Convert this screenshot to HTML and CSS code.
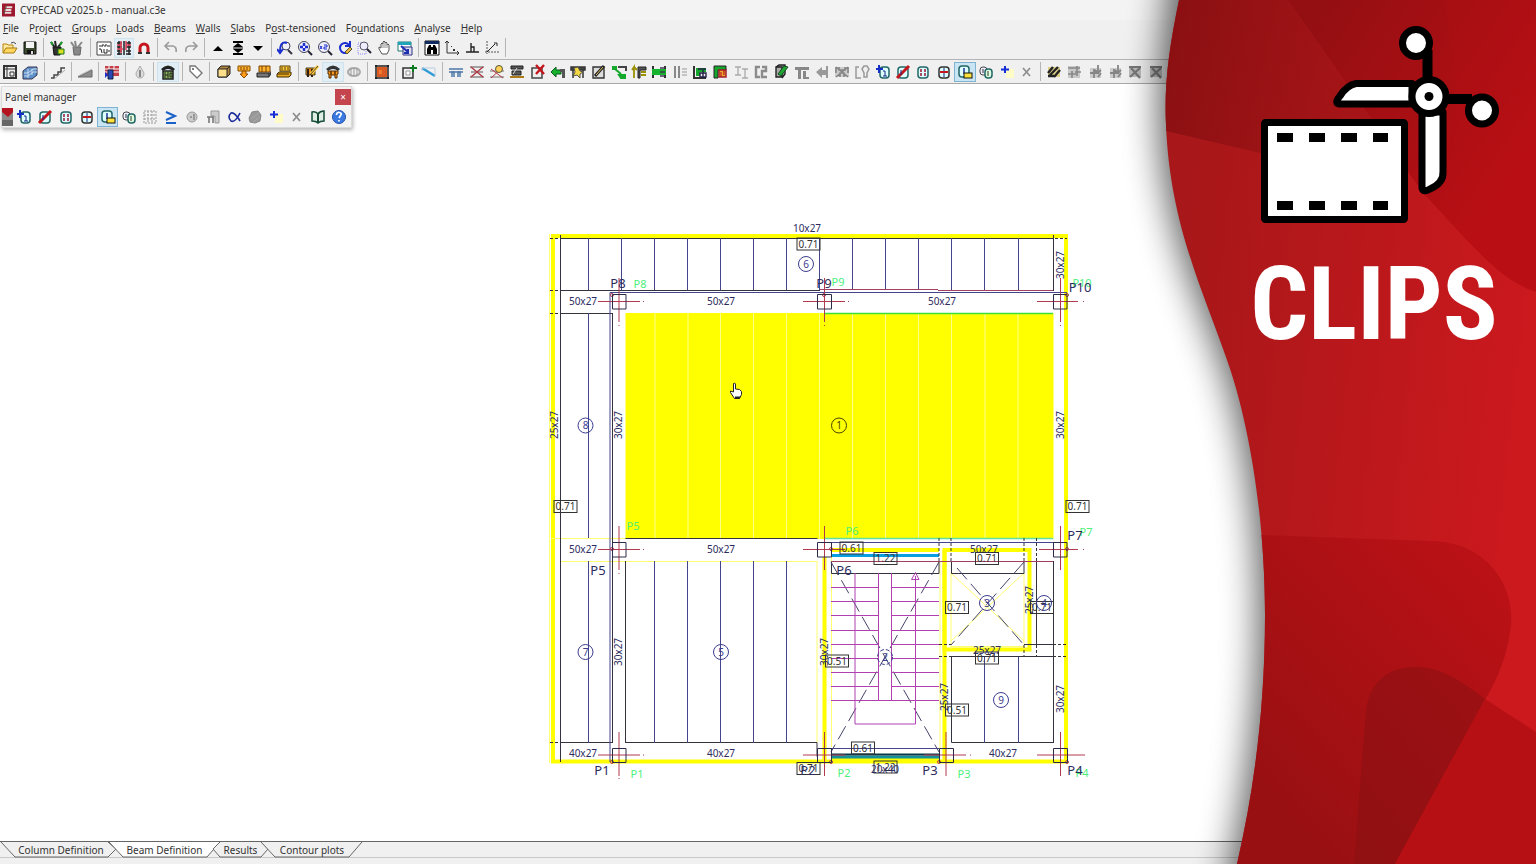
FILE: index.html
```html
<!doctype html>
<html lang="en">
  <head>
    <meta charset="UTF-8" />
    <meta name="viewport" content="width=device-width, initial-scale=1.0" />
    <title>CYPECAD v2025.b - manual.c3e</title>
    <link rel="stylesheet" href="styles.css">
  </head>
  <body>
    <!-- Icon set, 16x16 -->
    <svg class="icon-defs" aria-hidden="true">
      <symbol id="open" viewBox="0 0 16 16"><path d="M1 13V4h4l1 1h5v3" fill="#ffe9a0" stroke="#b8860b"/><path d="M1 13 4 8h11l-3 5z" fill="#ffd75e" stroke="#a87a10"/><path d="M9 3q3-2 5 1" fill="none" stroke="#444"/></symbol>
      <symbol id="save" viewBox="0 0 16 16"><path d="M2 2h12v12H2z" fill="#3c4a30" stroke="#111"/><path d="M4 2h8v6H4z" fill="#f4f4f4"/><path d="M5 10h7v4H5z" fill="#111"/><path d="M9 11h2v3H9z" fill="#ddd"/></symbol>
      <symbol id="cup" viewBox="0 0 16 16"><path d="M4 7h8l-1 8H5z" fill="#333" stroke="#111"/><path d="m2 2 4 6M6 1l1 6m6-5L9 7" stroke="#222" stroke-width="2"/><path d="m2 2 2 3m9-3-2 3" stroke="#17a02c" stroke-width="2"/><path d="M9 9h6v5H9z" fill="#d8e020" stroke="#197219"/></symbol>
      <symbol id="cup-off" viewBox="0 0 16 16"><path d="M4 7h8l-1 8H5z" fill="#888" stroke="#666"/><path d="m2 2 4 6M6 1l1 6m6-5L9 7" stroke="#888" stroke-width="2"/></symbol>
      <symbol id="dxf" viewBox="0 0 16 16"><path d="M1 2h14v13H1z" fill="#fff" stroke="#444"/><path d="M3 6h4V4m1 2h2V4m1 2h3M3 9h2l1 4M8 9v4h3V9m1 2h2" fill="none" stroke="#222"/></symbol>
      <symbol id="template" viewBox="0 0 16 16"><path d="M1 3h5m4 0h5M1 7h5m4 0h5M1 11h5m4 0h5M1 14h5m4 0h5M3 1v14M8 1v14M13 1v14" stroke="#222" stroke-width="1.500"/><path d="M1 5h5m4 0h5M1 9h6M5 1v12M10 1v9" stroke="#e0405a" stroke-width="1.500"/></symbol>
      <symbol id="magnet" viewBox="0 0 16 16"><path d="M4 14V8a4 4 0 0 1 8 0v6" fill="none" stroke="#c4161c" stroke-width="3"/><path d="M2 12h4v2H2zm8 0h4v2h-4z" fill="#333"/></symbol>
      <symbol id="undo" viewBox="0 0 16 16"><path d="M6 2 2 6l4 4M2 6h8q4 1 3 6" fill="none" stroke="#9a9a9a" stroke-width="1.6"/></symbol>
      <symbol id="redo" viewBox="0 0 16 16"><path d="m10 2 4 4-4 4m4-4H6q-4 1-3 6" fill="none" stroke="#9a9a9a" stroke-width="1.6"/></symbol>
      <symbol id="up" viewBox="0 0 16 16"><path d="m3 11 5-5 5 5z"/></symbol>
      <symbol id="updown" viewBox="0 0 16 16"><path d="M3 1h10v2H3zm0 12h10v2H3zM3 7l5-4 5 4zm0 2 5 4 5-4z"/><path d="M3 8h10" stroke="#000"/></symbol>
      <symbol id="down" viewBox="0 0 16 16"><path d="m3 6 5 5 5-5z"/></symbol>
      <symbol id="zoom-prev" viewBox="0 0 16 16"><circle cx="9" cy="6" r="4" fill="#eef" stroke="#445"/><path d="m11 10 4 4" stroke="#334" stroke-width="2"/><path d="M10 3Q3 0 3 12M0 9l3 4 3-4" fill="none" stroke="#1b2fd0" stroke-width="2"/></symbol>
      <symbol id="zoom-all" viewBox="0 0 16 16"><circle cx="7" cy="7" r="5.5" fill="#eef" stroke="#445"/><path d="M7 3v8M3 7h8" stroke="#1b2fd0" stroke-width="2.4" stroke-dasharray="3 2"/><path d="m11 11 4 4" stroke="#223" stroke-width="2"/></symbol>
      <symbol id="zoom-x2" viewBox="0 0 16 16"><circle cx="7" cy="7" r="5.5" fill="#eef" stroke="#445"/><path d="M3 6l2 3m0-3L3 9m4-4h3v2H7v2h3" fill="none" stroke="#1b2fd0"/><path d="m11 11 4 4" stroke="#223" stroke-width="2"/></symbol>
      <symbol id="redraw" viewBox="0 0 16 16"><path d="M12 5a5 5 0 1 0 0 6M13 1v5H8" fill="none" stroke="#1b2fd0" stroke-width="2"/><path d="m8 12 5-5 2 2-5 5z" fill="#e6b33c" stroke="#553"/></symbol>
      <symbol id="zoom-win" viewBox="0 0 16 16"><path d="M1 3h8v11H1z" fill="none" stroke="#88f" stroke-dasharray="1 1"/><circle cx="7" cy="6" r="4" fill="#eef" stroke="#556"/><path d="m10 9 4 4" stroke="#223" stroke-width="2"/></symbol>
      <symbol id="hand" viewBox="0 0 16 16"><path d="M5 14 2 9V7l2 1V4l1-1 1 1V2l1-1 1 1v1l1-1 1 1v2l1-1 1 1v5l-2 4z" fill="#fff" stroke="#555"/><path d="M6 4v4m2-5v5m2-4v4" stroke="#888"/></symbol>
      <symbol id="windows" viewBox="0 0 16 16"><path d="M1 2h13v9H1z" fill="#fff" stroke="#277"/><path d="M1 2h13v3H1z" fill="#21a4b8"/><path d="M6 7h9v8H6z" fill="#dde" stroke="#338"/><path d="m4 6 7 6m-4 1h4V9" fill="none" stroke="#1b2fb0" stroke-width="2"/></symbol>
      <symbol id="find" viewBox="0 0 16 16"><path d="M1 1h14v14H1z" fill="#fff" stroke="#111"/><path d="M1 1h14v3H1z" fill="#112a60"/><path d="M3 14V9l2-4h2v2h2V5h2l2 4v5H9v-4H7v4z"/></symbol>
      <symbol id="axes" viewBox="0 0 16 16"><path d="M3 1v12h12M1 3l2-2 2 2m8 8 2 2-2 2" fill="none" stroke="#333"/><path d="m7 6 1 1m3 2-2 2m0-2 2 2" stroke="#333"/></symbol>
      <symbol id="ortho" viewBox="0 0 16 16"><path d="M2 12h13M7 3v9m0-5h3v5" fill="none" stroke="#222" stroke-width="1.4"/></symbol>
      <symbol id="angle" viewBox="0 0 16 16"><path d="M3 1v13M1 12h14" stroke="#555" stroke-dasharray="2 1"/><path d="m3 12 8-8m-1-1h3v3" fill="none" stroke="#222"/></symbol>
      <symbol id="sheet" viewBox="0 0 16 16"><path d="M2 2h12v12H2z" fill="#eee" stroke="#333" stroke-width="2"/><path d="M5 2v12M2 5h12M8 8h4v4H8z" fill="none" stroke="#333"/></symbol>
      <symbol id="slabs" viewBox="0 0 16 16"><path d="M1 7 6 3h9v8l-5 4H1z" fill="#5d8fc8" stroke="#335"/><path d="M2 9h4l5-4h4M2 12h4l5-4h4M6 5v9m4-9v6" fill="none" stroke="#cde"/></symbol>
      <symbol id="stairs" viewBox="0 0 16 16"><path d="M1 14h3v-3h4V8h3V4h4" fill="none" stroke="#444" stroke-width="1.5"/><path d="m4 15 11-9" stroke="#aaa"/></symbol>
      <symbol id="ramp" viewBox="0 0 16 16"><path d="M1 13 15 6v7z" fill="#8d8d8d" stroke="#666"/><path d="M1 12 15 5" stroke="#bbb"/></symbol>
      <symbol id="brick" viewBox="0 0 16 16"><path d="M1 2h14v10H1z" fill="#c43f49"/><path d="M1 5h14M1 8h14M5 2v3m5-3v3" stroke="#fff"/><path d="M4 6h5v9H4z" fill="#2846b4" stroke="#124"/><path d="m1 8 3 3-3 3z" fill="#1b2fd0"/></symbol>
      <symbol id="drop" viewBox="0 0 16 16"><path d="M8 2 4 9q0 5 4 5t4-5z" fill="#ddd" stroke="#aaa"/><path d="M8 6v7" stroke="#888" stroke-width="2"/></symbol>
      <symbol id="cable" viewBox="0 0 16 16"><path d="M1 5q7-7 14 0l-2 2q-5-4-10 0z" fill="#222"/><path d="M3 7h10v8H3z" fill="#8bb85a" stroke="#222" stroke-width="1.5"/><path d="M5 8v6m3-6v6m-3-3h3m2-2v4h2V9z" fill="none" stroke="#222"/></symbol>
      <symbol id="tag" viewBox="0 0 16 16"><path d="M2 2h5l7 7-5 5-7-7z" fill="#fff" stroke="#777" stroke-width="1.4"/><circle cx="5" cy="5" r="1" fill="#555"/></symbol>
      <symbol id="cube" viewBox="0 0 16 16"><path d="m2 5 3-3h9v8l-3 3H2z" fill="#b0843b" stroke="#222"/><path d="M2 5h9v8H2z" fill="#ffe08a" stroke="#222"/><path d="m11 5 3-3" stroke="#222"/></symbol>
      <symbol id="load" viewBox="0 0 16 16"><path d="M2 2h12v5H2z" fill="#ffb52d" stroke="#8a4a00"/><path d="M5 3v3m3-3v3m3-3v3" stroke="#7b3f00"/><path d="m4 10 4 4 4-4h-2V7H6v3z" fill="#ff9b1a" stroke="#8a4a00"/></symbol>
      <symbol id="load-line" viewBox="0 0 16 16"><path d="M3 2h11v6H3z" fill="#ffb52d" stroke="#7b3f00"/><path d="M6 2v6m4-6v6" stroke="#7b3f00"/><path d="M1 9h12v4H1z" fill="#777" stroke="#222"/><path d="m13 9 2-2v4l-2 2z" fill="#444"/></symbol>
      <symbol id="load-slab" viewBox="0 0 16 16"><path d="M4 2h10v5H4z" fill="#ffcf40" stroke="#5d3c00"/><path d="M6 3v3m3-3v3m3-3v3" stroke="#5d3c00"/><path d="m1 10 2-2h12v3l-2 2H1z" fill="#e9a820" stroke="#3d2c00"/><path d="M1 10h12" stroke="#3d2c00"/></symbol>
      <symbol id="edit-load" viewBox="0 0 16 16"><path d="M2 4h9v7H2z" fill="#e98a19" stroke="#442"/><path d="M4 5v8m4-8v8" stroke="#321" stroke-width="2"/><path d="m7 10 7-8" stroke="#ffcf40" stroke-width="3"/><path d="m6 11 8-9" stroke="#543"/></symbol>
      <symbol id="show-load" viewBox="0 0 16 16"><path d="M1 5q7-7 14 0l-2 2q-5-4-10 0z" fill="#333"/><path d="M3 7h10v3h-1v4h-2v-3H6v3H4v-4H3z" fill="#f39a1e" stroke="#5b2b00"/><path d="M6 7v4m4-4v4" stroke="#5b2b00" stroke-width="1.500"/></symbol>
      <symbol id="ring-off" viewBox="0 0 16 16"><ellipse cx="8" cy="8" rx="6" ry="4" fill="#eee" stroke="#aaa" stroke-width="2"/><path d="M5 4v8m3-8v8m3-8v8" stroke="#999"/></symbol>
      <symbol id="opening" viewBox="0 0 16 16"><path d="M2 2h12v12H2z" fill="#d95a22" stroke="#555" stroke-width="2"/><path d="M1 1h2v2H1zm12 0h2v2h-2zM1 13h2v2H1zm12 0h2v2h-2z" fill="#222"/><path d="M5 6h3v4H5z" fill="#f07a36"/></symbol>
      <symbol id="new-beam" viewBox="0 0 16 16"><path d="M2 4h10v10H2z" fill="#eee" stroke="#333" stroke-width="1.5"/><path d="M5 7h4v4H5z" fill="#fff" stroke="#999"/><path d="M12 1v7M9 4h7" stroke="#0a7a20" stroke-width="2"/></symbol>
      <symbol id="line-beam" viewBox="0 0 16 16"><path d="m1 4 13 8" stroke="#2e9ad6" stroke-width="2.4"/><path d="M1 7V4h13v9" fill="none" stroke="#bcd"/></symbol>
      <symbol id="supports" viewBox="0 0 16 16"><path d="M1 5h14M1 8h14" stroke="#4d7aa8" stroke-width="1.6"/><path d="M4 13V8h2v5m4 0V8h2v5" fill="none" stroke="#4d7aa8" stroke-width="1.500"/></symbol>
      <symbol id="cross-red" viewBox="0 0 16 16"><path d="M1 3h14M1 13h14M2 8h12" stroke="#555"/><path d="m2 3 12 10M14 3 2 13" stroke="#b23844" stroke-width="1.4"/></symbol>
      <symbol id="cross-bell" viewBox="0 0 16 16"><path d="M1 7h14M1 13h14" stroke="#777"/><path d="m2 5 12 9M12 5 2 14" stroke="#b23844"/><circle cx="10" cy="5" r="3.5" fill="#ffd257" stroke="#553"/></symbol>
      <symbol id="depth" viewBox="0 0 16 16"><path d="M2 2h12v3H2zm1 5h9v4H3z" fill="#555" stroke="#222"/><path d="M1 13h14" stroke="#ad7a18" stroke-width="2"/><path d="m8 4-4 6" stroke="#ddd"/></symbol>
      <symbol id="delete-beam" viewBox="0 0 16 16"><path d="M2 4h10v10H2z" fill="#eee" stroke="#444" stroke-width="1.5"/><path d="m6 1 8 9m0-9-8 9" stroke="#c4161c" stroke-width="2.4"/></symbol>
      <symbol id="assign" viewBox="0 0 16 16"><path d="m1 8 5-5v3h5v4H6v3z" fill="#15b32c" stroke="#0a5a18"/><path d="M10 5h5v9h-3V8h-2z" fill="#555"/></symbol>
      <symbol id="star-beam" viewBox="0 0 16 16"><path d="M1 3h14v3H1zM3 6v8m10-8v8" fill="#444" stroke="#333" stroke-width="1.5"/><path d="m8 3 2 4 3 1-3 2v4l-3-3-4 1 2-4-1-4z" fill="#f6d842" stroke="#554"/></symbol>
      <symbol id="edit-beam" viewBox="0 0 16 16"><path d="M2 3h11v11H2z" fill="#ddd" stroke="#333" stroke-width="1.4"/><path d="m4 12 9-10" stroke="#222" stroke-width="3"/><path d="m5 11 7-8" stroke="#e4c265"/></symbol>
      <symbol id="align" viewBox="0 0 16 16"><path d="M1 2h5v4H1z" fill="#14a82c"/><path d="M7 3h8v4" fill="none" stroke="#444" stroke-width="2"/><path d="m4 5 6 5m-2 1h6v3h-4z" fill="#14a82c" stroke="#14a82c" stroke-width="2"/></symbol>
      <symbol id="offset" viewBox="0 0 16 16"><path d="M7 3h8v3H9v8H7z" fill="#555" stroke="#222"/><path d="M3 14V3L1 6m2-3 3 3M10 8h5m-5 3h5" fill="none" stroke="#9a9000" stroke-width="1.8"/></symbol>
      <symbol id="join" viewBox="0 0 16 16"><path d="M2 2v12M14 2v12" stroke="#333" stroke-width="2"/><path d="M1 5h14v6H1z" fill="#16b42d"/><path d="M9 4h5M9 8h5m-5 4h5" stroke="#435" stroke-width="1.500"/></symbol>
      <symbol id="lines-off" viewBox="0 0 16 16"><path d="M3 2v12M7 2v12" stroke="#888" stroke-width="2"/><path d="M10 5h5M10 8h5m-5 3h5" stroke="#999"/></symbol>
      <symbol id="frame" viewBox="0 0 16 16"><path d="M2 2v12h12" fill="none" stroke="#333" stroke-width="2"/><path d="M4 4h10v4H8v4H4z" fill="#16a62d"/><path d="M8 9h6v4H8zM6 5h8M11 6v7" fill="none" stroke="#224" stroke-width="1.4"/></symbol>
      <symbol id="copy-frame" viewBox="0 0 16 16"><path d="M2 2h12v4H6v8H2z" fill="#16a62d" stroke="#222"/><path d="M7 6h7v7H7z" fill="#f0a62b" stroke="#a0202c" stroke-width="1.5"/><path d="M9 8v5m3-7v5" stroke="#a02"/></symbol>
      <symbol id="ibeam-off" viewBox="0 0 16 16"><path d="M2 3h6M5 3v8M2 11h6m1-6h6m-3 0v9m-3 0h6" fill="none" stroke="#aaa" stroke-width="1.3"/></symbol>
      <symbol id="copy-off" viewBox="0 0 16 16"><path d="M7 3H3v10h4m2-10h4v4H9v6h5" fill="none" stroke="#8b8b8b" stroke-width="2.4"/></symbol>
      <symbol id="edit-green" viewBox="0 0 16 16"><path d="M3 3h6v10H3zl3-2h6v9l-3 4" fill="#aaa" stroke="#222" stroke-width="1.4"/><path d="m5 10 6-8 4 1-7 9z" fill="#1fa735" stroke="#124d1b"/></symbol>
      <symbol id="portal-off" viewBox="0 0 16 16"><path d="M1 3h14v3H7v9H4V6H1zm8 4h3v6h3v2H9z" fill="#888"/></symbol>
      <symbol id="left-off" viewBox="0 0 16 16"><path d="m2 8 6-5v3h5v5H8v3zM12 2h2v12h-2z" fill="#999"/></symbol>
      <symbol id="mesh-off" viewBox="0 0 16 16"><path d="M1 3h14v10H1z" fill="#ccc"/><path d="m2 3 12 10M14 3 2 13M2 3v6m12-6v6M5 3v3h6V3M6 13V9h4v4" fill="none" stroke="#858585" stroke-width="1.6"/></symbol>
      <symbol id="poly-off" viewBox="0 0 16 16"><path d="M5 3H2v11h5" fill="none" stroke="#999" stroke-width="1.5"/><path d="M8 5l2-3h3l2 3-2 4v4h-3V9z" fill="none" stroke="#999" stroke-width="1.500"/></symbol>
      <symbol id="p-new" viewBox="0 0 16 16"><rect x="5" y="3" width="9" height="11" rx="3" fill="#dff" stroke="#266" stroke-width="1.5"/><path d="M8 7h2v5m-2 0h4" fill="none" stroke="#14248c"/><path d="M4 1v8M1 5h7" stroke="#142fc8" stroke-width="2"/></symbol>
      <symbol id="p-del" viewBox="0 0 16 16"><rect x="3" y="3" width="10" height="11" rx="3" fill="#dff" stroke="#266" stroke-width="1.5"/><path d="m2 14 12-12" stroke="#c4161c" stroke-width="3"/><path d="M6 6v5" stroke="#14248c"/></symbol>
      <symbol id="p-num" viewBox="0 0 16 16"><rect x="3" y="3" width="10" height="11" rx="3" fill="#dff" stroke="#266" stroke-width="1.5"/><path d="M6 5v7m4-7v7" stroke="#a12440" stroke-width="1.6" stroke-dasharray="3 1"/></symbol>
      <symbol id="p-split" viewBox="0 0 16 16"><rect x="3" y="3" width="10" height="11" rx="3" fill="#dff" stroke="#333" stroke-width="1.5"/><path d="M8 4v9" stroke="#14248c"/><path d="M4 8h8" stroke="#c4161c" stroke-width="2"/></symbol>
      <symbol id="p-edit" viewBox="0 0 16 16"><rect x="2" y="2" width="10" height="11" rx="3" fill="#dff" stroke="#266" stroke-width="1.5"/><path d="M7 4v6" stroke="#14248c" stroke-width="1.4"/><rect x="7" y="9" width="8" height="5" fill="#ffe23a" stroke="#111"/></symbol>
      <symbol id="p-copy" viewBox="0 0 16 16"><rect x="2" y="3" width="7" height="8" rx="3" fill="#eef" stroke="#444"/><rect x="7" y="5" width="7" height="9" rx="3" fill="#dfd" stroke="#266" stroke-width="1.5"/><path d="M5 5v4m5-2v5" stroke="#333"/></symbol>
      <symbol id="plus-note" viewBox="0 0 16 16"><path d="M7 5h8v9H7z" fill="#fffcc8"/><path d="M6 2v7M2 5.500h8" stroke="#142fd8" stroke-width="2"/></symbol>
      <symbol id="x-off" viewBox="0 0 16 16"><path d="m4 4 7 8m0-8-7 8" stroke="#8d8d8d" stroke-width="1.7"/></symbol>
      <symbol id="rebar" viewBox="0 0 16 16"><path d="M2 3h12v10H2z" fill="#ddd18a"/><path d="m2 9 5-6m-3 8 8-8M8 13l6-7M2 12h6" stroke="#222" stroke-width="2.4"/></symbol>
      <symbol id="add-off" viewBox="0 0 16 16"><path d="M2 2h12v12H2z" fill="#c8c8c8"/><path d="M2 4h12M6 7v7M2 10h8m1-8v10m-2-4h6" stroke="#888" stroke-width="1.6"/></symbol>
      <symbol id="move-off" viewBox="0 0 16 16"><path d="M3 4h11v10H3z" fill="#ccc"/><path d="M3 9h9m-5 5V5m4 8 3-4M11 1v7M8 6l3 3 3-3" fill="none" stroke="#858585" stroke-width="1.8"/></symbol>
      <symbol id="del-off" viewBox="0 0 16 16"><path d="M2 3h12v10H2z" fill="#bbb"/><path d="m3 13 10-9M4 4l9 10M2 3h12" stroke="#777" stroke-width="2.2"/></symbol>
      <symbol id="p-grid" viewBox="0 0 16 16"><path d="M2 2h12v12H2zM6 2v12m4-12v12M2 6h12M2 10h12" fill="none" stroke="#999" stroke-dasharray="2 1"/></symbol>
      <symbol id="geq" viewBox="0 0 16 16"><path d="m3 3 9 4-9 4m0 3h10" fill="none" stroke="#1a62c8" stroke-width="2"/></symbol>
      <symbol id="disk-off" viewBox="0 0 16 16"><circle cx="8" cy="8" r="5" fill="#ccc" stroke="#999"/><path d="M6 8h2m2-3v6" fill="none" stroke="#888" stroke-width="1.5"/></symbol>
      <symbol id="col-off" viewBox="0 0 16 16"><path d="M6 2h8v12h-4V7H6z" fill="#ccc" stroke="#999"/><path d="M2 8h7M4 8v6m4-6v6" stroke="#777" stroke-width="1.6"/></symbol>
      <symbol id="alpha" viewBox="0 0 16 16"><path d="M14 4Q9 14 5 12q-4-4 0-8 4-1 9 8" fill="none" stroke="#1c2c9a" stroke-width="1.6"/></symbol>
      <symbol id="rock-off" viewBox="0 0 16 16"><path d="m2 9 3-6 6-1 3 4-1 6-5 2-5-1z" fill="#999" stroke="#888"/><path d="m4 10 8-6m-6 9 7-5" stroke="#aaa"/></symbol>
      <symbol id="book" viewBox="0 0 16 16"><path d="M2 3q4-1 6 2 2-3 6-3v10q-4 0-6 2-2-2-6-2z" fill="#dfeee4" stroke="#124a35" stroke-width="1.5"/><path d="M8 5v9" stroke="#124a35" stroke-width="2"/></symbol>
      <symbol id="help" viewBox="0 0 16 16"><circle cx="8" cy="8" r="6.500" fill="#3a7ae0" stroke="#2350b0"/><path d="M5.500 6q0-3 3-2.500 3 1 1 3L8 9m0 2v1.500" fill="none" stroke="#fff" stroke-width="1.7"/></symbol>
      <symbol id="grip" viewBox="0 0 11 18"><path d="M0 3h11v15H0z" fill="#8a8a8a"/><path d="M0 12h11v6H0z" fill="#666"/><path d="M0 0h11v4L6 9 0 4z" fill="#b5121f"/></symbol>
    </svg>

    <header class="app-header">
      <div class="titlebar">
        <svg class="app-icon" viewBox="0 0 14 14" aria-hidden="true"><path d="M0 0h14v14H0z" fill="#9e1830"/><path d="M4 3h7v2H4zM3 6h7v2H3zm0 3h7v2H3z" fill="#e9dcdc"/><path d="m2 11 3-9" stroke="#554" /></svg>
        <span>CYPECAD v2025.b - manual.c3e</span>
      </div>
      <nav class="menubar">
        <a href="#"><u>F</u>ile</a>
        <a href="#">P<u>r</u>oject</a>
        <a href="#"><u>G</u>roups</a>
        <a href="#"><u>L</u>oads</a>
        <a href="#"><u>B</u>eams</a>
        <a href="#"><u>W</u>alls</a>
        <a href="#"><u>S</u>labs</a>
        <a href="#">P<u>o</u>st-tensioned</a>
        <a href="#">Fo<u>u</u>ndations</a>
        <a href="#"><u>A</u>nalyse</a>
        <a href="#"><u>H</u>elp</a>
      </nav>
      <div class="toolbar" role="toolbar" aria-label="Main">
        <button class="tool" aria-label="Open"><svg><use href="#open"/></svg></button>
        <button class="tool" aria-label="Save"><svg><use href="#save"/></svg></button>
        <span class="sep"></span>
        <button class="tool" aria-label="Edit resources"><svg><use href="#cup"/></svg></button>
        <button class="tool" aria-label="Resources"><svg><use href="#cup-off"/></svg></button>
        <span class="sep"></span>
        <button class="tool" aria-label="DXF template"><svg><use href="#dxf"/></svg></button>
        <button class="tool soft" aria-label="Template views"><svg><use href="#template"/></svg></button>
        <button class="tool" aria-label="Snap"><svg><use href="#magnet"/></svg></button>
        <span class="sep"></span>
        <button class="tool" aria-label="Undo"><svg><use href="#undo"/></svg></button>
        <button class="tool" aria-label="Redo"><svg><use href="#redo"/></svg></button>
        <span class="sep"></span>
        <button class="tool" aria-label="Group up"><svg><use href="#up"/></svg></button>
        <button class="tool" aria-label="Go to group"><svg><use href="#updown"/></svg></button>
        <button class="tool" aria-label="Group down"><svg><use href="#down"/></svg></button>
        <span class="sep"></span>
        <button class="tool" aria-label="Previous view"><svg><use href="#zoom-prev"/></svg></button>
        <button class="tool" aria-label="Full view"><svg><use href="#zoom-all"/></svg></button>
        <button class="tool" aria-label="Double view"><svg><use href="#zoom-x2"/></svg></button>
        <button class="tool" aria-label="Redraw"><svg><use href="#redraw"/></svg></button>
        <button class="tool" aria-label="Zoom window"><svg><use href="#zoom-win"/></svg></button>
        <button class="tool" aria-label="Pan"><svg><use href="#hand"/></svg></button>
        <button class="tool" aria-label="Windows"><svg><use href="#windows"/></svg></button>
        <span class="sep"></span>
        <button class="tool" aria-label="Find"><svg><use href="#find"/></svg></button>
        <button class="tool" aria-label="Coordinates"><svg><use href="#axes"/></svg></button>
        <button class="tool" aria-label="Orthogonal"><svg><use href="#ortho"/></svg></button>
        <button class="tool" aria-label="Angle"><svg><use href="#angle"/></svg></button>
        <span class="sep"></span>
      </div>
      <div class="toolbar toolbar-wide" role="toolbar" aria-label="Beam definition">
        <button class="tool" aria-label="General data"><svg><use href="#sheet"/></svg></button>
        <button class="tool" aria-label="3D view"><svg><use href="#slabs"/></svg></button>
        <span class="sep"></span>
        <button class="tool" aria-label="Stairs"><svg><use href="#stairs"/></svg></button>
        <span class="sep"></span>
        <button class="tool" aria-label="Ramp"><svg><use href="#ramp"/></svg></button>
        <span class="sep"></span>
        <button class="tool" aria-label="Masonry"><svg><use href="#brick"/></svg></button>
        <span class="sep"></span>
        <button class="tool" aria-label="Fire"><svg><use href="#drop"/></svg></button>
        <span class="sep"></span>
        <button class="tool soft" aria-label="Visible items"><svg><use href="#cable"/></svg></button>
        <span class="sep"></span>
        <button class="tool" aria-label="Label"><svg><use href="#tag"/></svg></button>
        <span class="sep"></span>
        <button class="tool" aria-label="Solid"><svg><use href="#cube"/></svg></button>
        <button class="tool" aria-label="Point load"><svg><use href="#load"/></svg></button>
        <button class="tool" aria-label="Line load"><svg><use href="#load-line"/></svg></button>
        <button class="tool" aria-label="Surface load"><svg><use href="#load-slab"/></svg></button>
        <span class="sep"></span>
        <button class="tool" aria-label="Edit loads"><svg><use href="#edit-load"/></svg></button>
        <button class="tool soft" aria-label="Show loads"><svg><use href="#show-load"/></svg></button>
        <button class="tool" aria-label="Load ring"><svg><use href="#ring-off"/></svg></button>
        <span class="sep"></span>
        <button class="tool" aria-label="Opening"><svg><use href="#opening"/></svg></button>
        <span class="sep"></span>
        <button class="tool" aria-label="New beam"><svg><use href="#new-beam"/></svg></button>
        <button class="tool" aria-label="Beam line"><svg><use href="#line-beam"/></svg></button>
        <span class="sep"></span>
        <button class="tool" aria-label="Supports"><svg><use href="#supports"/></svg></button>
        <button class="tool" aria-label="Braces"><svg><use href="#cross-red"/></svg></button>
        <button class="tool" aria-label="Brace info"><svg><use href="#cross-bell"/></svg></button>
        <button class="tool" aria-label="Depth"><svg><use href="#depth"/></svg></button>
        <button class="tool" aria-label="Delete beam"><svg><use href="#delete-beam"/></svg></button>
        <button class="tool" aria-label="Assign"><svg><use href="#assign"/></svg></button>
        <button class="tool" aria-label="Match"><svg><use href="#star-beam"/></svg></button>
        <button class="tool" aria-label="Edit beam"><svg><use href="#edit-beam"/></svg></button>
        <button class="tool" aria-label="Align"><svg><use href="#align"/></svg></button>
        <button class="tool" aria-label="Offset"><svg><use href="#offset"/></svg></button>
        <button class="tool" aria-label="Join"><svg><use href="#join"/></svg></button>
        <button class="tool" aria-label="Ties"><svg><use href="#lines-off"/></svg></button>
        <button class="tool" aria-label="Frame"><svg><use href="#frame"/></svg></button>
        <button class="tool" aria-label="Copy frame"><svg><use href="#copy-frame"/></svg></button>
        <button class="tool" aria-label="Sections"><svg><use href="#ibeam-off"/></svg></button>
        <button class="tool" aria-label="Copy"><svg><use href="#copy-off"/></svg></button>
        <button class="tool" aria-label="Edit portal"><svg><use href="#edit-green"/></svg></button>
        <button class="tool" aria-label="Portal"><svg><use href="#portal-off"/></svg></button>
        <button class="tool" aria-label="Back"><svg><use href="#left-off"/></svg></button>
        <button class="tool" aria-label="Mesh"><svg><use href="#mesh-off"/></svg></button>
        <button class="tool" aria-label="Contour"><svg><use href="#poly-off"/></svg></button>
        <button class="tool" aria-label="New panel"><svg><use href="#p-new"/></svg></button>
        <button class="tool" aria-label="Delete panel"><svg><use href="#p-del"/></svg></button>
        <button class="tool" aria-label="Number panels"><svg><use href="#p-num"/></svg></button>
        <button class="tool" aria-label="Split panel"><svg><use href="#p-split"/></svg></button>
        <button class="tool on" aria-label="Edit panel"><svg><use href="#p-edit"/></svg></button>
        <button class="tool" aria-label="Copy panel"><svg><use href="#p-copy"/></svg></button>
        <button class="tool" aria-label="Add note"><svg><use href="#plus-note"/></svg></button>
        <button class="tool" aria-label="Remove"><svg><use href="#x-off"/></svg></button>
        <span class="sep"></span>
        <button class="tool" aria-label="Reinforcement"><svg><use href="#rebar"/></svg></button>
        <button class="tool" aria-label="Add bar"><svg><use href="#add-off"/></svg></button>
        <button class="tool" aria-label="Move bar"><svg><use href="#move-off"/></svg></button>
        <button class="tool" aria-label="Copy bar"><svg><use href="#move-off"/></svg></button>
        <button class="tool" aria-label="Edit bar"><svg><use href="#del-off"/></svg></button>
        <button class="tool" aria-label="Delete bar"><svg><use href="#del-off"/></svg></button>
      </div>
    </header>

    <main class="workspace">
      <svg class="plan" viewBox="0 84 1536 757" preserveAspectRatio="xMinYMin meet" role="img" aria-label="Floor plan">
        <!-- slab panel in selection colour -->
        <path d="M625.500 313h428v226h-428z" fill="#ff0"/>
        <path class="rib-light" d="M655 313v226M688 313v226M720.500 313v226M753.500 313v226M786.500 313v226M819.500 313v226M852.500 313v226M885.500 313v226M918.500 313v226M951.500 313v226M985 313v226M1018 313v226"/>

        <!-- load lines -->
        <g class="load-lines">
          <rect x="553" y="236" width="513" height="525.500"/>
          <path d="M824.500 557v205M944.500 550v212M831 550h108M831 760h108"/>
          <rect x="944.500" y="550" width="85" height="99.500"/>
        </g>
        <path class="load-thin" d="M549.500 234v529M551 538.500h266M560 561.500h257M817 561v182M831.500 557v190M940 561v188M951 573v76M1024 573v76M951 573l73 68M951 641l73-68M951 646.500h73"/>

        <!-- beam outlines and joists -->
        <g class="lines">
          <path d="M560.500 235v527M560 238.500h493M560 290.500h260M560 313.500h52M612.500 313v430M560 742.500h52M625.500 538.500h192M625.500 561v182M626 742.500h191v14M1053.500 235v56M831.500 561v12.500h107.500V561M951.500 561v12.500h72.500V561M1036.500 561v84M1053.500 561v182M1024 644.500h29M951 656.500h102M951.500 656v86.500h102"/>
        </g>
        <g class="joists">
          <path d="M588.500 238v52M621.500 238v52M654.500 238v52M687.500 238v52M720.500 238v52M753.500 238v52M786.500 238v52M819.500 238v52M852.500 238v52M885.500 238v52M918.500 238v52M951.500 238v52M984.500 238v52M1018.500 238v52"/>
          <path d="M588.500 313v225M588.500 561v182M654.500 561v182M687.500 561v182M720.500 561v182M753.500 561v182M786.500 561v182M984.500 657v86M1018.500 657v86"/>
          <path d="M610 762V292.500h457M824 542.500h243M831 748.500h108"/>
        </g>
        <path class="red" d="M820 289.500h118M938 290.500h115M831 561.500h222"/>
        <path d="M824 313.500h229" stroke="#3be03b" stroke-width="1.500"/>
        <path d="M824 538.500h229" stroke="#62e0a0" stroke-width="1.500"/>
        <path d="M831 555.500h108" stroke="#0a9fe0" stroke-width="3"/>
        <path d="M831 757h108" stroke="#16909a" stroke-width="3"/>
        <path d="M831 754.500h108" stroke="#0a3a4a" stroke-width="2"/>
        <path class="dots" d="M550 238.500h10M550 290.500h10M550 313.500h10M550 742.500h10M1055 238.500h12M939 538v23M951 538v23M1024 538v23M1036.500 538v23M1024 645v12M1036.500 645v12M939 644.500h12M939 656.500h12M1053 644.500h14M1053 656.500h14"/>
        <path class="diagonals" d="M831 562 939 752M939 562 831 752M957 568l67 77M1024 562l-73 83"/>

        <!-- staircase -->
        <path class="stair" d="M831 587.500h48m12 0h48M831 601.500h48m12 0h48M831 615.500h48m12 0h48M831 630.500h48m12 0h48M831 644.500h48m12 0h48M831 658.500h48m12 0h48M831 672.500h48m12 0h48M831 686.500h48m12 0h48M831 700.500h108M878.500 573v127M891.500 573v127M855 573v151h60.500V576M911.500 579.500h7.500l-3.500-7z"/>

        <!-- columns -->
        <g class="axes">
          <path d="M598 301.500h42M643 301.500h1M619 278v44M619 325v1M803 301.500h42M848 301.500h1M824.500 278v44M824.500 325v1M1037 301.500h41M1083 301.500h1M1060.500 278v44M1060.500 325v1"/>
          <path d="M598 549.500h42M643 549.500h1M619 526v44M619 573v1M803 549.500h42M824.500 526v44M1039 549.500h39M1083 549.500h1M1060.500 526v44"/>
          <path d="M598 755h42M643 755h1M619 732v44M619 778v1M803 755h42M824.500 732v44M924 755h42M970 755h1M946 732v44M1037 755h48M1060.500 732v44"/>
          <circle cx="612" cy="549" r="1.500"/><circle cx="831" cy="549" r="1.500"/><circle cx="1067" cy="549" r="1.500"/>
          <circle cx="612" cy="762" r="1.500"/><circle cx="831" cy="762" r="1.500"/><circle cx="939" cy="762" r="1.500"/><circle cx="1067" cy="762" r="1.500"/>
          <circle cx="612" cy="295" r="1.500"/><circle cx="824" cy="295" r="1.500"/><circle cx="1067" cy="295" r="1.500"/>
        </g>
        <path class="columns" d="M612.500 294.500h13.500v14.500h-13.500zM817.500 294.500h14v14.500h-14zM1053.500 294.500h13.500v14.500h-13.500zM612.500 542.500h13.500v14.500h-13.500zM817.500 542.500h14v14.500h-14zM1053.500 542.500h13.500v14.500h-13.500zM612.500 748.500h13.500v14h-13.500zM817.500 748.500h14v14h-14zM939.500 748.500h14v14h-14zM1053.500 748.500h14v14h-14z"/>

        <!-- load values -->
        <g class="boxes">
          <rect x="797" y="238" width="23" height="12"/>
          <rect x="554" y="500.500" width="23" height="12"/>
          <rect x="1066" y="500.500" width="23" height="12"/>
          <rect x="840" y="542" width="23" height="12"/>
          <rect x="874" y="552.500" width="23" height="12"/>
          <rect x="975.500" y="552.500" width="23" height="12"/>
          <rect x="945.500" y="601.500" width="23" height="12"/>
          <rect x="1030.500" y="601.500" width="23" height="12"/>
          <rect x="975.500" y="652" width="23" height="12"/>
          <rect x="825.500" y="655" width="23" height="12"/>
          <rect x="945.500" y="704" width="23" height="12"/>
          <rect x="851.500" y="742" width="23" height="12"/>
          <rect x="874" y="761" width="23" height="12"/>
          <rect x="797" y="762.500" width="23" height="12"/>
        </g>
        <g class="numbers">
          <text x="808.500" y="248">0.71</text>
          <text x="565.500" y="510">0.71</text>
          <text x="1077.500" y="510">0.71</text>
          <text x="851.500" y="552">0.61</text>
          <text x="885.500" y="562">1.22</text>
          <text x="987" y="562">0.71</text>
          <text x="957" y="611">0.71</text>
          <text x="1042" y="611">0.71</text>
          <text x="987" y="662">0.71</text>
          <text x="837" y="665">0.51</text>
          <text x="957" y="714">0.51</text>
          <text x="863" y="752">0.61</text>
          <text x="885.500" y="771">1.22</text>
          <text x="808.500" y="772">0.71</text>
        </g>

        <!-- beam sizes -->
        <g class="sizes">
          <text x="807" y="232">10x27</text>
          <text x="583" y="305">50x27</text>
          <text x="721" y="305">50x27</text>
          <text x="942" y="305">50x27</text>
          <text x="583" y="553">50x27</text>
          <text x="721" y="553">50x27</text>
          <text x="984" y="553">50x27</text>
          <text x="987" y="654">25x27</text>
          <text x="583" y="757">40x27</text>
          <text x="721" y="757">40x27</text>
          <text x="1003" y="757">40x27</text>
          <text x="885" y="773">20x40</text>
          <text transform="translate(1064 265) rotate(-90)">30x27</text>
          <text transform="translate(1064 425) rotate(-90)">30x27</text>
          <text transform="translate(1064 699) rotate(-90)">30x27</text>
          <text transform="translate(558 425) rotate(-90)">25x27</text>
          <text transform="translate(622 425) rotate(-90)">30x27</text>
          <text transform="translate(622 652) rotate(-90)">30x27</text>
          <text transform="translate(828 652) rotate(-90)">30x27</text>
          <text transform="translate(948 697) rotate(-90)">25x27</text>
          <text transform="translate(1033 600) rotate(-90)">25x27</text>
        </g>

        <!-- panel numbers -->
        <g class="balloons">
          <circle cx="806" cy="264" r="7.500"/><text x="806" y="268">6</text>
          <circle cx="585.500" cy="425.500" r="7.500"/><text x="585.500" y="429">8</text>
          <circle cx="585.500" cy="652" r="7.500"/><text x="585.500" y="656">7</text>
          <circle cx="721" cy="652" r="7.500"/><text x="721" y="656">5</text>
          <circle cx="987" cy="603" r="7.500"/><text x="987" y="607">3</text>
          <circle cx="1044" cy="603" r="7.500"/><text x="1044" y="607">4</text>
          <circle cx="1001" cy="700" r="7.500"/><text x="1001" y="704">9</text>
          <circle cx="885" cy="657" r="7.500" stroke-dasharray="4 2"/><text x="885" y="661">2</text>
        </g>
        <g class="balloons selected">
          <circle cx="839" cy="425.500" r="7.500"/><text x="839" y="429">1</text>
        </g>

        <!-- column names -->
        <g class="refs-green">
          <text x="640" y="288">P8</text>
          <text x="838" y="286">P9</text>
          <text x="1082" y="287">P10</text>
          <text x="633" y="530">P5</text>
          <text x="852" y="535">P6</text>
          <text x="1086" y="536">P7</text>
          <text x="637" y="778">P1</text>
          <text x="844" y="777">P2</text>
          <text x="964" y="778">P3</text>
          <text x="1082" y="777">P4</text>
        </g>
        <g class="refs">
          <text x="618" y="288">P8</text>
          <text x="824" y="288">P9</text>
          <text x="1080" y="292">P10</text>
          <text x="598" y="575">P5</text>
          <text x="844" y="575">P6</text>
          <text x="1075" y="540">P7</text>
          <text x="602" y="775">P1</text>
          <text x="808" y="775">P2</text>
          <text x="930" y="775">P3</text>
          <text x="1075" y="775">P4</text>
        </g>

        <path d="M733.500 383.500q1.500-1 2 .5v5l4 .5 2 2v3l-2 4h-5l-4-6v-1.500l3 1z" fill="#fff" stroke="#222"/>
        <path d="M735 397.500h5" stroke="#222" stroke-width="2"/>
      </svg>

      <section class="panel-manager">
        <header class="panel-head">
          <h2>Panel manager</h2>
          <button class="close" aria-label="Close">×</button>
        </header>
        <div class="panel-tools" role="toolbar" aria-label="Panel manager">
          <svg class="grip"><use href="#grip"/></svg>
          <button class="tool" aria-label="Enter panel"><svg><use href="#p-new"/></svg></button>
          <button class="tool" aria-label="Delete panel"><svg><use href="#p-del"/></svg></button>
          <button class="tool" aria-label="Number"><svg><use href="#p-num"/></svg></button>
          <button class="tool" aria-label="Divide"><svg><use href="#p-split"/></svg></button>
          <button class="tool on" aria-label="Edit"><svg><use href="#p-edit"/></svg></button>
          <button class="tool" aria-label="Copy"><svg><use href="#p-copy"/></svg></button>
          <button class="tool" aria-label="Grid"><svg><use href="#p-grid"/></svg></button>
          <button class="tool" aria-label="Match joists"><svg><use href="#geq"/></svg></button>
          <button class="tool" aria-label="Fixity"><svg><use href="#disk-off"/></svg></button>
          <button class="tool" aria-label="Column"><svg><use href="#col-off"/></svg></button>
          <button class="tool" aria-label="Fixity coefficient"><svg><use href="#alpha"/></svg></button>
          <button class="tool" aria-label="Environment"><svg><use href="#rock-off"/></svg></button>
          <button class="tool" aria-label="Add"><svg><use href="#plus-note"/></svg></button>
          <button class="tool" aria-label="Remove"><svg><use href="#x-off"/></svg></button>
          <button class="tool" aria-label="Manual"><svg><use href="#book"/></svg></button>
          <button class="tool" aria-label="Help"><svg><use href="#help"/></svg></button>
        </div>
      </section>
    </main>

    <footer class="app-footer">
      <nav class="tabs">
        <button class="tab tab-column"><svg viewBox="0 0 115 16" preserveAspectRatio="none"><path d="M0 0 14 15H107L115 7 107 0"/></svg><span>Column Definition</span></button>
        <button class="tab tab-beam active"><svg viewBox="0 0 111 16" preserveAspectRatio="none"><path d="M0 0 14 15H98L111 0"/></svg><span>Beam Definition</span></button>
        <button class="tab tab-results"><svg viewBox="0 0 55 16" preserveAspectRatio="none"><path d="M7 0 0 7 7 15H48L55 7 49 0"/></svg><span>Results</span></button>
        <button class="tab tab-contour"><svg viewBox="0 0 102 16" preserveAspectRatio="none"><path d="M0 0 14 15H88L101 0"/></svg><span>Contour plots</span></button>
      </nav>
      <div class="statusbar"></div>
    </footer>

    <aside class="promo">
      <svg viewBox="1100 0 436 864" preserveAspectRatio="xMaxYMin slice" role="img" aria-label="Clips">
        <defs>
          <linearGradient id="red-base" gradientUnits="userSpaceOnUse" x1="1180" y1="300" x2="1536" y2="340"><stop offset="0" stop-color="#a81719"/><stop offset="1" stop-color="#cc191e"/></linearGradient>
          <linearGradient id="red-left" gradientUnits="userSpaceOnUse" x1="1166" y1="80" x2="1380" y2="130"><stop offset="0" stop-color="#8c1012"/><stop offset="1" stop-color="#aa1518"/></linearGradient>
          <linearGradient id="red-top" gradientUnits="userSpaceOnUse" x1="1320" y1="0" x2="1536" y2="140"><stop offset="0" stop-color="#930f12"/><stop offset="1" stop-color="#b90f14"/></linearGradient>
          <linearGradient id="red-low" gradientUnits="userSpaceOnUse" x1="1262" y1="800" x2="1510" y2="580"><stop offset="0" stop-color="#981012"/><stop offset="1" stop-color="#bb1116"/></linearGradient>
          <clipPath id="wave"><path d="M1179 0C1169 48 1164 85 1166 125C1170 225 1203 290 1227 360C1250 425 1265 520 1265 615C1265 710 1254 790 1237 864H1536V0z"/></clipPath>
        </defs>
        <path class="wave-shadow" d="M1173 -40C1163 48 1158 85 1160 125C1164 225 1197 290 1221 360C1244 425 1259 520 1259 615C1259 710 1248 790 1224 904H1576V-40z"/>
        <g clip-path="url(#wave)">
          <path d="M1100 0h436v864h-436z" fill="url(#red-base)"/>
          <path d="M1160 130 1166 131 1260 153 1408 190V172L1340 75 1288 0H1160z" fill="url(#red-left)"/>
          <path d="M1288 0h248v292C1500 280 1478 252 1425 195L1408 172z" fill="url(#red-top)"/>
          <path d="M1443 0h93v43l-84 107q8-80-9-150z" fill="#c01016" opacity=".12"/>
          <path d="M1200 535h62l168 6C1490 541 1515 590 1511 625C1508 655 1497 680 1485 700L1395 864H1200z" fill="url(#red-low)"/>
          <path d="M1354 864 1366 710C1370 680 1390 667 1415 667C1440 667 1460 680 1485 699L1395 864z" fill="#860f12" opacity=".5"/>
          <path d="M1395 864 1485 699 1536 732V864z" fill="#b61014"/>
        </g>
        <rect x="1264.500" y="122.500" width="140" height="97" rx="1" fill="#fff" stroke="#000" stroke-width="7" stroke-linejoin="round"/>
        <path d="M1277 133h16v9h-16zm32 0h16v9h-16zm32 0h16v9h-16zm32 0h15v9h-15zM1277 201h16v9h-16zm32 0h16v9h-16zm32 0h16v9h-16zm32 0h15v9h-15z"/>
        <g fill="#fff" stroke="#000" stroke-width="7" stroke-linejoin="round">
          <path d="M1356 83.500h56v20.500h-73q-5-1 1-8 7-11 16-12.500z"/>
          <path d="M1422 112v76q1 5 8 1 14-6 13-18v-59z"/>
          <path d="M1427.500 50v32M1444 99h28" stroke-width="10"/>
          <circle cx="1416" cy="43" r="13.500"/>
          <circle cx="1482" cy="110.500" r="13.500"/>
          <circle cx="1429" cy="96.500" r="17"/>
        </g>
        <circle cx="1429" cy="96.500" r="4.500"/>
        <text class="promo-title" x="1374" y="339">CLIPS</text>
      </svg>
    </aside>
  </body>
</html>
```
FILE: styles.css
```css
* {
  box-sizing: border-box;
}

body {
  margin: 0;
  height: 100vh;
  display: flex;
  flex-direction: column;
  position: relative;
  overflow: hidden;
  background: #fff;
  color: #333;
  font: 10px/16px "Noto Sans", "Open Sans", sans-serif;
}

button {
  font: inherit;
  color: inherit;
  padding: 0;
  border: 0;
  background: none;
}

.icon-defs {
  position: absolute;
  width: 0;
  height: 0;
}

/* Header */
.app-header {
  background: #f0f0f0;
}

.titlebar {
  display: flex;
  align-items: center;
  gap: 5px;
  height: 20px;
  padding-left: 2px;
  background: #f3f3f3;
}

.app-icon {
  width: 13px;
  height: 14px;
}

.menubar {
  display: flex;
  gap: 10px;
  height: 16px;
  padding-left: 3px;
}

.menubar a {
  color: #333;
  text-decoration: none;
}

.toolbar {
  display: flex;
  align-items: center;
  height: 24px;
  border-bottom: 1px solid #b4b4b4;
}

.tool {
  flex: 0 0 20px;
  height: 20px;
  display: flex;
  align-items: center;
  justify-content: center;
}

.tool svg {
  width: 16px;
  height: 16px;
  flex: none;
}

.tool.soft {
  background: #e1eef5;
  border: 1px solid #cfe3ee;
}

.tool.on {
  background: #c9e4f3;
  border: 1px solid #7eb4d2;
}

.sep {
  flex: 0 0 7px;
  height: 19px;
  background: linear-gradient(#b5b5b5, #b5b5b5) center / 1px 100% no-repeat;
}

.toolbar-wide {
  padding-right: calc(100% - 1166px);
  border-bottom-color: #a8a8a8;
}

.toolbar-wide .tool {
  flex: 1 1 0;
}

/* Drawing area */
.workspace {
  flex: 1;
  min-height: 0;
  position: relative;
}

.plan {
  display: block;
  width: 100%;
  height: 100%;
  fill: none;
}

.lines {
  stroke: #33333f;
}

.joists {
  stroke: #45458c;
}

.rib-light {
  stroke: #ffff8c;
}

.load-lines {
  stroke: #ff0;
  stroke-width: 4px;
}

.load-thin {
  stroke: #ffff70;
}

.red {
  stroke: #a04060;
}

.dots {
  stroke: #333;
  stroke-dasharray: 3 2;
}

.diagonals {
  stroke: #44446c;
  stroke-dasharray: 15 6;
}

.stair {
  stroke: #b040b0;
}

.axes {
  stroke: #b03a50;
}

.columns {
  stroke: #2c2c48;
}

.boxes {
  stroke: #333;
}

.plan text {
  text-anchor: middle;
}

.numbers {
  font-size: 10px;
  fill: #333;
}

.sizes {
  font-size: 10px;
  fill: #2c2c60;
}

.balloons {
  font-size: 10px;
  stroke: #3c3c90;
}

.balloons text {
  fill: #3c3c90;
  stroke: none;
}

.balloons.selected {
  stroke: #444400;
}

.balloons.selected text {
  fill: #444400;
}

.refs {
  font-size: 13px;
  fill: #2c2c5c;
}

.refs-green {
  font-size: 11px;
  fill: #4cf07a;
}

/* Floating tool window */
.panel-manager {
  position: absolute;
  left: 1px;
  top: 2px;
  width: 351px;
  background: #f3f3f3;
  border: 1px solid #dadada;
  box-shadow: 1px 2px 4px rgba(0, 0, 0, 0.3);
}

.panel-head {
  display: flex;
  justify-content: space-between;
  align-items: center;
  height: 19px;
  padding-left: 3px;
}

.panel-head h2 {
  margin: 0;
  font-size: 10px;
  font-weight: normal;
}

.close {
  width: 16px;
  height: 16px;
  background: #c4454d;
  color: #fff;
  line-height: 14px;
}

.panel-tools {
  display: flex;
  align-items: center;
  height: 21px;
}

.panel-tools .tool {
  flex-basis: 21px;
}

.grip {
  flex: 0 0 11px;
  height: 18px;
}

/* Footer */
.app-footer {
  background: #f0f0f0;
  border-top: 1px solid #666;
}

.tabs {
  display: flex;
  height: 16px;
  padding-left: 1px;
  border-bottom: 1px solid #c8c8c8;
}

.tab {
  position: relative;
  height: 16px;
  line-height: 13px;
  text-align: center;
  margin-right: -7px;
}

.tab svg {
  position: absolute;
  inset: 0;
  width: 100%;
  height: 100%;
  fill: #f0f0f0;
  stroke: #666;
}

.tab.active svg {
  fill: #fff;
}

.tab span {
  position: relative;
}

.tab-column {
  width: 115px;
  padding-left: 5px;
}

.tab-beam {
  width: 111px;
}

.tab-results {
  width: 55px;
}

.tab-contour {
  width: 102px;
}

.statusbar {
  height: 6px;
}

/* Side banner */
.promo {
  position: absolute;
  top: 0;
  right: 0;
  height: 100%;
  aspect-ratio: 436 / 864;
  overflow: hidden;
  pointer-events: none;
}

.promo svg {
  display: block;
  width: 100%;
  height: 100%;
}

.wave-shadow {
  fill: #000;
  opacity: 0.65;
  filter: blur(18px);
}

.promo-title {
  font: bold 102px "Roboto Condensed", "Liberation Sans Narrow", Roboto, sans-serif;
  fill: #fff;
  text-anchor: middle;
}
```
